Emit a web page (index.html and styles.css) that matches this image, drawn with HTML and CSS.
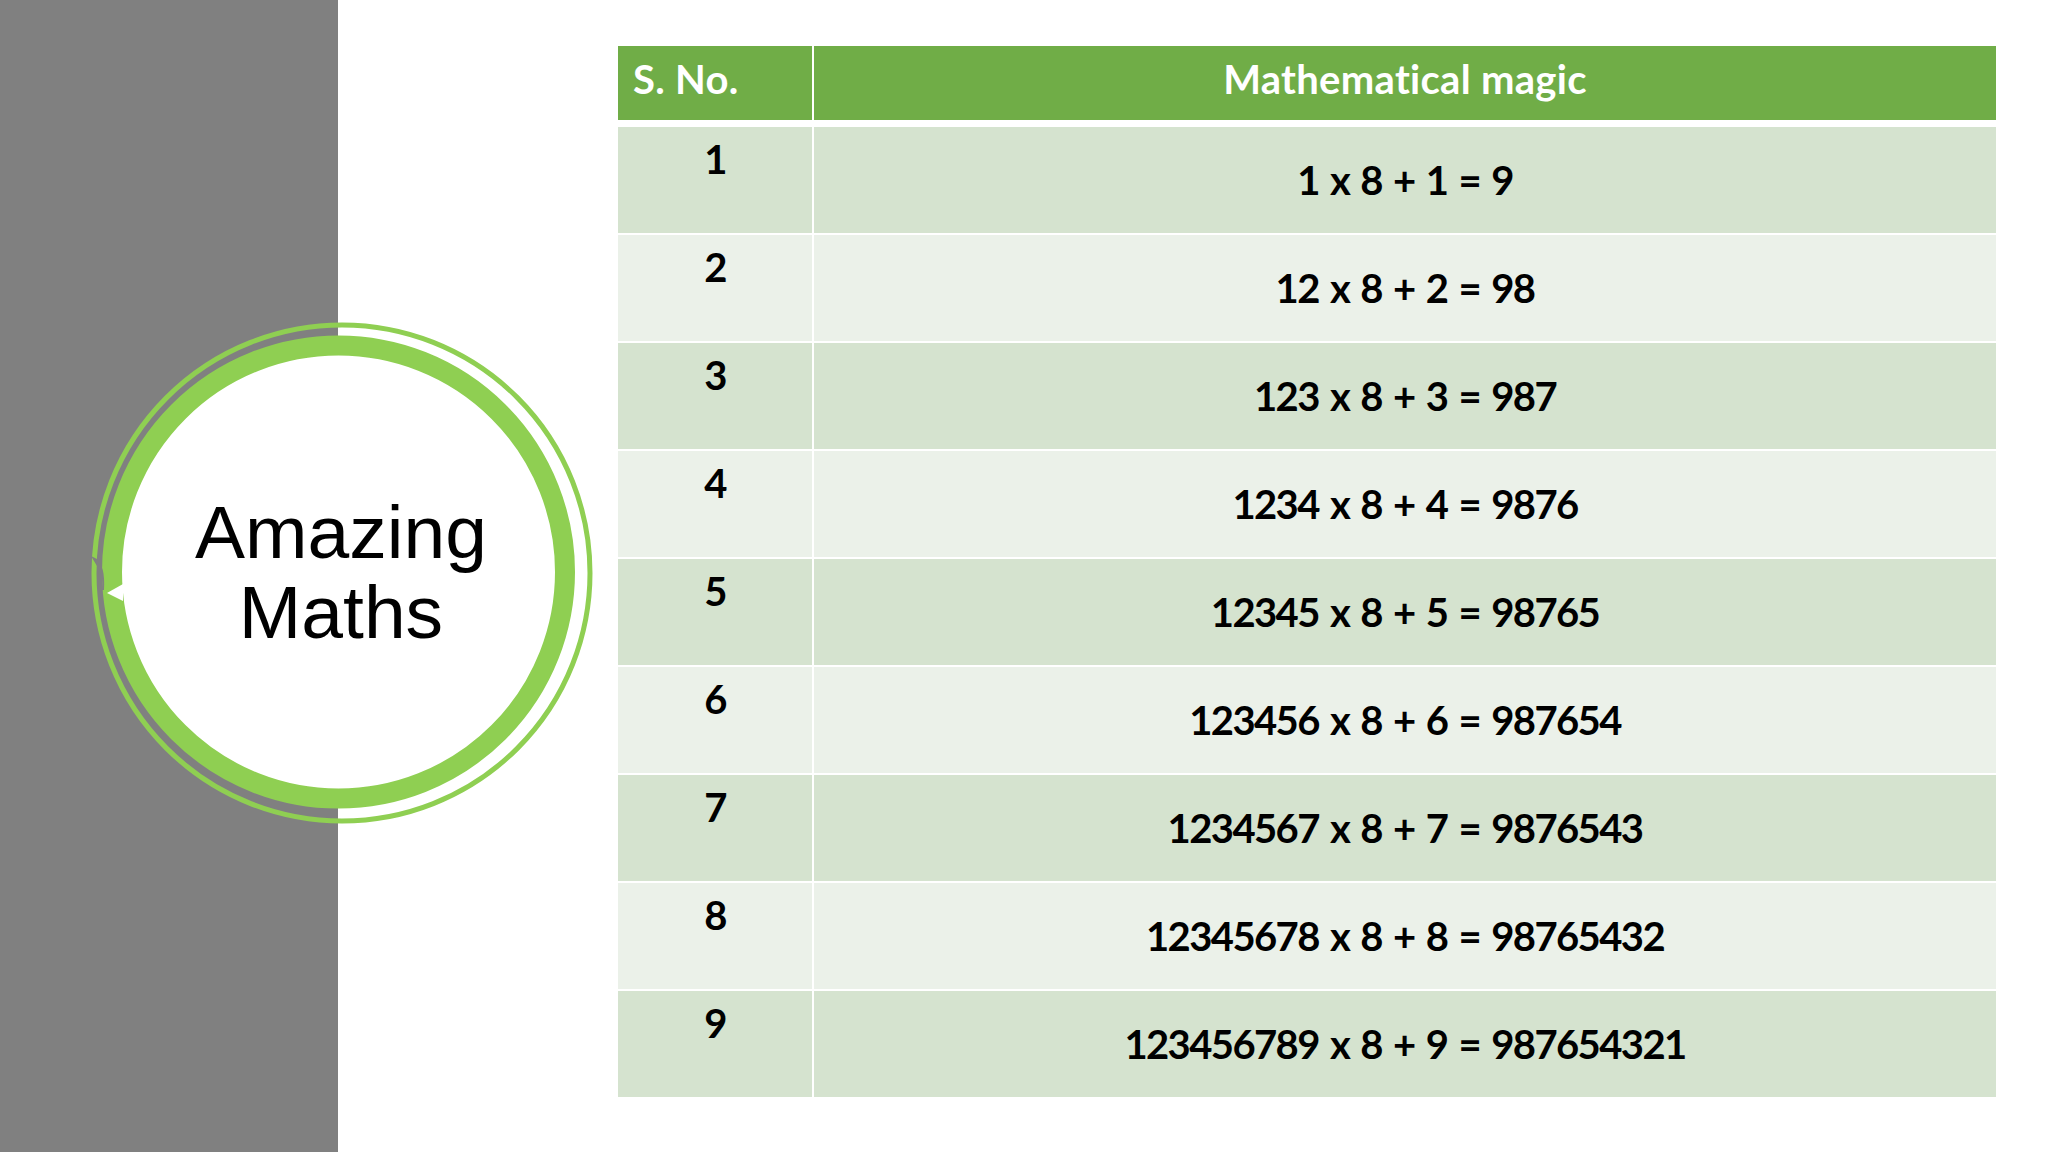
FILE: index.html
```html
<!DOCTYPE html>
<html lang="en">
<head>
<meta charset="utf-8">
<title>Amazing Maths</title>
<link rel="stylesheet" href="styles.css">
</head>
<body>
<div class="slide">
  <aside class="sidebar"></aside>
  <main class="content">
    <div class="table">
      <div class="th th-no">S. No.</div>
      <div class="th th-magic">Mathematical magic</div>

      <div class="td no band1">1</div>
      <div class="td eq band1">1 x 8 + 1 = 9</div>

      <div class="td no band2">2</div>
      <div class="td eq band2">12 x 8 + 2 = 98</div>

      <div class="td no band1">3</div>
      <div class="td eq band1">123 x 8 + 3 = 987</div>

      <div class="td no band2">4</div>
      <div class="td eq band2">1234 x 8 + 4 = 9876</div>

      <div class="td no band1">5</div>
      <div class="td eq band1">12345 x 8 + 5 = 98765</div>

      <div class="td no band2">6</div>
      <div class="td eq band2">123456 x 8 + 6 = 987654</div>

      <div class="td no band1">7</div>
      <div class="td eq band1">1234567 x 8 + 7 = 9876543</div>

      <div class="td no band2">8</div>
      <div class="td eq band2">12345678 x 8 + 8 = 98765432</div>

      <div class="td no band1">9</div>
      <div class="td eq band1">123456789 x 8 + 9 = 987654321</div>
    </div>
  </main>

  <div class="badge">
    <svg class="badge-ring" viewBox="51 282 580 580" width="580" height="580" xmlns="http://www.w3.org/2000/svg">
      <circle cx="338.5" cy="572" r="218" fill="#ffffff"/>
      <circle cx="342" cy="573" r="248" fill="none" stroke="#8fcf52" stroke-width="5"/>
      <circle cx="338.5" cy="572" r="226.5" fill="none" stroke="#8fcf52" stroke-width="20"/>
      <path d="M91 556 L99 560 L97 566 Z" fill="#808080"/>
      <path d="M97 560 C101 566 104 572 103 590" fill="none" stroke="#808080" stroke-width="2"/>
      <path d="M107 593 L123 584 L123 601 Z" fill="#ffffff"/>
    </svg>
    <div class="badge-text">Amazing<br>Maths</div>
  </div>
</div>
</body>
</html>
```

FILE: styles.css
```css
html, body {
  margin: 0;
  padding: 0;
}

body {
  width: 2048px;
  height: 1152px;
  background: #ffffff;
  overflow: hidden;
}

.slide {
  position: relative;
  display: flex;
  width: 2048px;
  height: 1152px;
  background: #ffffff;
}

.sidebar {
  width: 338px;
  height: 100%;
  background: #808080;
  flex: 0 0 auto;
}

.content {
  flex: 1 1 auto;
  padding: 46px 0 0 280px;
}

.table {
  display: grid;
  grid-template-columns: 194px 1182px;
  grid-template-rows: 79px repeat(9, 106px);
  column-gap: 2px;
  row-gap: 2px;
  width: 1378px;
  font-family: Lato, "Open Sans", sans-serif;
  font-weight: 700;
}

.th {
  height: 74px;
  background: #70ad47;
  color: #ffffff;
  font-size: 40px;
  line-height: 48px;
  display: flex;
  align-items: center;
  padding-bottom: 8px;
  box-sizing: border-box;
  letter-spacing: 0.3px;
}

.th-no {
  padding-left: 15px;
}

.th-magic {
  justify-content: center;
}

.td {
  color: #000000;
  font-size: 40px;
  line-height: 48px;
  letter-spacing: -1.6px;
  word-spacing: 3px;
}

.band1 {
  background: #d5e3cf;
}

.band2 {
  background: #ebf1e9;
}

.no {
  text-align: center;
  padding-top: 8px;
  box-sizing: border-box;
}

.eq {
  display: flex;
  align-items: center;
  justify-content: center;
}

.badge {
  position: absolute;
  left: 51px;
  top: 282px;
  width: 580px;
  height: 580px;
}

.badge-ring {
  position: absolute;
  left: 0;
  top: 0;
  display: block;
}

.badge-text {
  position: absolute;
  left: 0;
  top: 0;
  width: 580px;
  height: 580px;
  display: flex;
  align-items: center;
  justify-content: center;
  text-align: center;
  font-family: "Liberation Sans", Arial, sans-serif;
  font-size: 75px;
  line-height: 80px;
  color: #000000;
}
```
